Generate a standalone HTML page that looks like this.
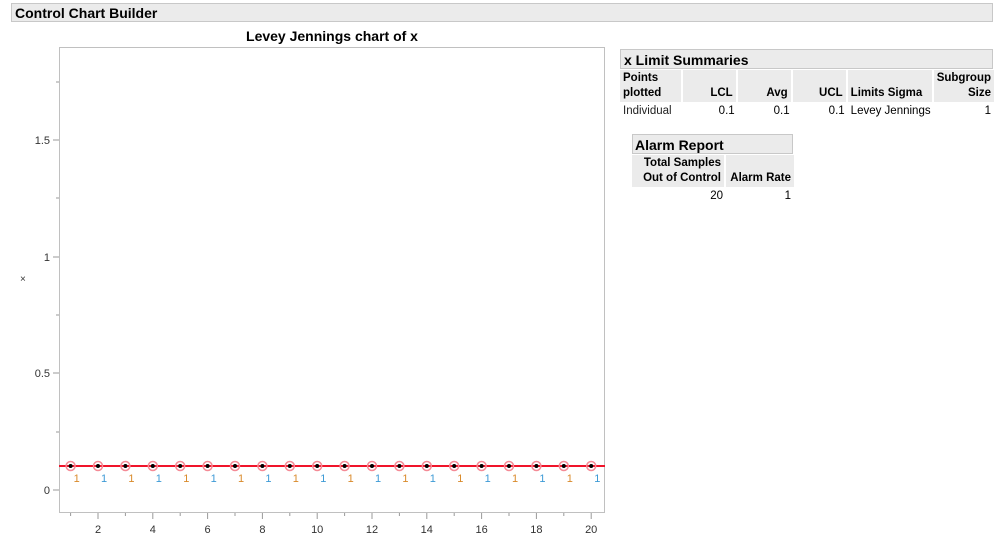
<!DOCTYPE html>
<html><head><meta charset="utf-8"><style>
body{margin:0;width:999px;height:558px;background:#fff;font-family:"Liberation Sans",sans-serif;position:relative;overflow:hidden}
.a{position:absolute}
.hdr{background:#ebebeb;border:1px solid #c8c8c8;font-weight:bold;color:#000}
table{border-collapse:separate;border-spacing:0;font-size:11.5px;white-space:nowrap}
th{background:#ebebeb;font-weight:bold;text-align:right;vertical-align:bottom;padding:1px 3px;border-right:2px solid #fff;line-height:15px}
td{text-align:right;padding:2px 3px;line-height:15px}
</style></head><body>
<div class="a hdr" style="left:11px;top:3px;width:982px;height:19px;font-size:14px;line-height:19px;padding-left:3px;box-sizing:border-box">Control Chart Builder</div>
<div class="a" style="left:59px;top:28px;width:546px;text-align:center;font-weight:bold;font-size:14px">Levey Jennings chart of x</div>
<svg class="a" style="left:0;top:0" width="615" height="558" font-family="Liberation Sans, sans-serif" font-size="11">
<rect x="59.5" y="47.5" width="545" height="465" fill="#fff" stroke="#c0c0c0"/>
<g stroke="#999">
<line x1="53" y1="140" x2="59" y2="140"/><line x1="53" y1="257" x2="59" y2="257"/><line x1="53" y1="373" x2="59" y2="373"/><line x1="53" y1="490" x2="59" y2="490"/>
<line x1="56" y1="82" x2="59" y2="82"/><line x1="56" y1="198" x2="59" y2="198"/><line x1="56" y1="315" x2="59" y2="315"/><line x1="56" y1="432" x2="59" y2="432"/>
</g>
<g fill="#333" text-anchor="end">
<text x="50" y="144">1.5</text><text x="50" y="261">1</text><text x="50" y="377">0.5</text><text x="50" y="494">0</text>
</g>
<text x="20" y="282" font-size="10" fill="#333">×</text>
<g stroke="#999">
<line x1="70.6" y1="513" x2="70.6" y2="516"/><line x1="98" y1="513" x2="98" y2="519"/><line x1="125.4" y1="513" x2="125.4" y2="516"/><line x1="152.8" y1="513" x2="152.8" y2="519"/><line x1="180.2" y1="513" x2="180.2" y2="516"/><line x1="207.6" y1="513" x2="207.6" y2="519"/><line x1="235" y1="513" x2="235" y2="516"/><line x1="262.4" y1="513" x2="262.4" y2="519"/><line x1="289.8" y1="513" x2="289.8" y2="516"/><line x1="317.2" y1="513" x2="317.2" y2="519"/><line x1="344.6" y1="513" x2="344.6" y2="516"/><line x1="372" y1="513" x2="372" y2="519"/><line x1="399.4" y1="513" x2="399.4" y2="516"/><line x1="426.8" y1="513" x2="426.8" y2="519"/><line x1="454.2" y1="513" x2="454.2" y2="516"/><line x1="481.6" y1="513" x2="481.6" y2="519"/><line x1="509" y1="513" x2="509" y2="516"/><line x1="536.4" y1="513" x2="536.4" y2="519"/><line x1="563.8" y1="513" x2="563.8" y2="516"/><line x1="591.2" y1="513" x2="591.2" y2="519"/>
</g>
<g fill="#333" text-anchor="middle">
<text x="98" y="533">2</text><text x="152.8" y="533">4</text><text x="207.6" y="533">6</text><text x="262.4" y="533">8</text><text x="317.2" y="533">10</text><text x="372" y="533">12</text><text x="426.8" y="533">14</text><text x="481.6" y="533">16</text><text x="536.4" y="533">18</text><text x="591.2" y="533">20</text>
</g>
<line x1="59" y1="466" x2="605" y2="466" stroke="#f0142a" stroke-width="2"/>
<g id="pts"></g>
</svg>
<script>
var g=document.getElementById('pts'),s='';
for(var i=0;i<20;i++){var x=70.6+i*27.4;s+='<circle cx="'+x+'" cy="466" r="4.5" fill="none" stroke="#f48a95" stroke-width="1.5"/><circle cx="'+x+'" cy="466" r="2" fill="#000"/><text x="'+(x+3)+'" y="482" font-size="11" fill="'+(i%2?'#3d9ad6':'#d98a2a')+'">1</text>';}
g.innerHTML=s;
</script>
<div class="a hdr" style="left:620px;top:49px;width:373px;height:20px;font-size:14px;line-height:20px;padding-left:3px;box-sizing:border-box">x Limit Summaries</div>
<table class="a" style="left:620px;top:70px;width:374px">
<tr><th style="text-align:left;width:55px">Points<br>plotted</th><th style="width:48px">LCL</th><th style="width:48px">Avg</th><th style="width:48px">UCL</th><th style="text-align:left;width:78px">Limits Sigma</th><th style="border-right:0">Subgroup<br>Size</th></tr>
<tr><td style="text-align:left;color:#222">Individual</td><td>0.1</td><td>0.1</td><td>0.1</td><td style="text-align:left">Levey Jennings</td><td>1</td></tr>
</table>
<div class="a hdr" style="left:632px;top:134px;width:161px;height:20px;font-size:14px;line-height:20px;padding-left:2px;box-sizing:border-box">Alarm Report</div>
<table class="a" style="left:632px;top:155px;width:162px">
<tr><th style="width:86px">Total Samples<br>Out of Control</th><th style="border-right:0">Alarm Rate</th></tr>
<tr><td>20</td><td>1</td></tr>
</table>
</body></html>
